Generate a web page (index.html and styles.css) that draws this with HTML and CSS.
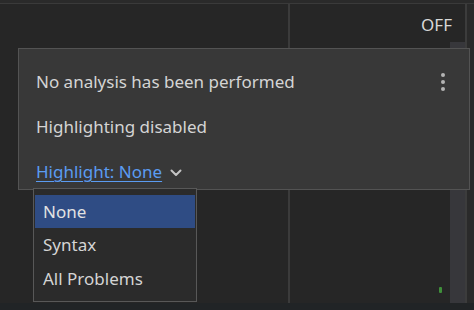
FILE: index.html
```html
<!DOCTYPE html>
<html lang="en">
<head>
    <meta charset="UTF-8">
    <title>Highlighting</title>
    <link rel="stylesheet" href="styles.css">
</head>
<body>
    <div class="ide">
        <div class="top-rule"></div>
        <div class="main">
            <div class="pane-left"></div>
            <div class="divider"></div>
            <div class="pane-right">
                <div class="right-head">OFF</div>
                <div class="right-body">
                    <div class="gutter">
                        <div class="green-mark"></div>
                    </div>
                    <div class="scrollbar"></div>
                </div>
            </div>
            <div class="edge"></div>
        </div>
        <div class="status"></div>
    </div>

    <!-- analysis popup -->
    <div class="popup">
        <div class="popup-row">
            <span class="popup-text">No analysis has been performed</span>
            <span class="kebab"><i></i><i></i><i></i></span>
        </div>
        <div class="popup-row">
            <span class="popup-text">Highlighting disabled</span>
        </div>
        <div class="popup-row">
            <a class="level-link">Highlight: None</a>
            <svg class="chevron" width="12" height="8" viewBox="0 0 12 8">
                <path d="M1.5 1.5 L6 6 L10.5 1.5" fill="none" stroke="#c4c4c4" stroke-width="2" stroke-linecap="round" stroke-linejoin="round"/>
            </svg>
        </div>
    </div>

    <div class="dropdown">
        <div class="option selected">None</div>
        <div class="option">Syntax</div>
        <div class="option">All Problems</div>
    </div>
</body>
</html>
```

FILE: styles.css
```css
* {
    margin: 0;
    padding: 0;
    box-sizing: border-box;
    font-family: "Noto Sans", "Open Sans", Arial, sans-serif;
}

html, body {
    width: 100%;
    height: 100%;
}

body {
    background: #262626;
    color: #d4d4d4;
    overflow: hidden;
    position: relative;
}

.ide {
    display: flex;
    flex-direction: column;
    height: 310px;
}

.top-rule {
    height: 4px;
    background: #2a2a2a;
    border-bottom: 1px solid #3a3a3a;
}

.main {
    flex: 1;
    display: flex;
}

.pane-left {
    width: 288px;
    background: #262626;
}

.divider {
    width: 2px;
    background: #3b3b3b;
}

.pane-right {
    width: 175px;
    display: flex;
    flex-direction: column;
}

.right-head {
    height: 38px;
    display: flex;
    align-items: center;
    justify-content: flex-end;
    padding: 2px 13px 0 0;
    font-size: 17px;
    color: #d8d8d8;
}

.right-body {
    flex: 1;
    display: flex;
}

.gutter {
    flex: 1;
    display: flex;
    align-items: flex-end;
    justify-content: flex-end;
    padding: 0 8px 10px 0;
}

.green-mark {
    width: 3px;
    height: 6px;
    background: #3f8f3a;
    border-radius: 1px;
}

.scrollbar {
    width: 15px;
    background: #37373b;
}

.edge {
    flex: 1;
    border-left: 2px solid #3c3c3c;
    background: #2a2a2a;
}

.status {
    height: 7px;
    background: #212426;
}

/* popup over the editor */
.popup {
    position: absolute;
    left: 18px;
    top: 48px;
    width: 452px;
    height: 142px;
    background: #383838;
    border: 1px solid #535353;
    padding: 22px 24px 0 17px;
    display: flex;
    flex-direction: column;
    gap: 23px;
}

.popup-row {
    display: flex;
    align-items: center;
    height: 22px;
    font-size: 17px;
    line-height: 22px;
}

.popup-text {
    flex: 1;
    color: #d4d4d4;
}

.kebab {
    display: flex;
    flex-direction: column;
    gap: 3px;
}

.kebab i {
    width: 4px;
    height: 4px;
    border-radius: 50%;
    background: #b4b4b4;
}

.level-link {
    color: #5b9cf2;
    text-decoration: underline;
    text-underline-offset: 3px;
    text-decoration-thickness: 1px;
    cursor: pointer;
}

.chevron {
    margin-left: 8px;
    margin-top: 1px;
}

.dropdown {
    position: absolute;
    left: 33px;
    top: 188px;
    width: 164px;
    height: 114px;
    background: #2b2b2b;
    border: 1px solid #585858;
    padding: 6px 1px 0;
}

.option {
    height: 34px;
    line-height: 34px;
    padding-left: 8px;
    font-size: 17px;
    color: #d4d4d4;
}

.option.selected {
    background: #2f4c84;
    color: #e2e2e2;
    height: 33px;
}
```
